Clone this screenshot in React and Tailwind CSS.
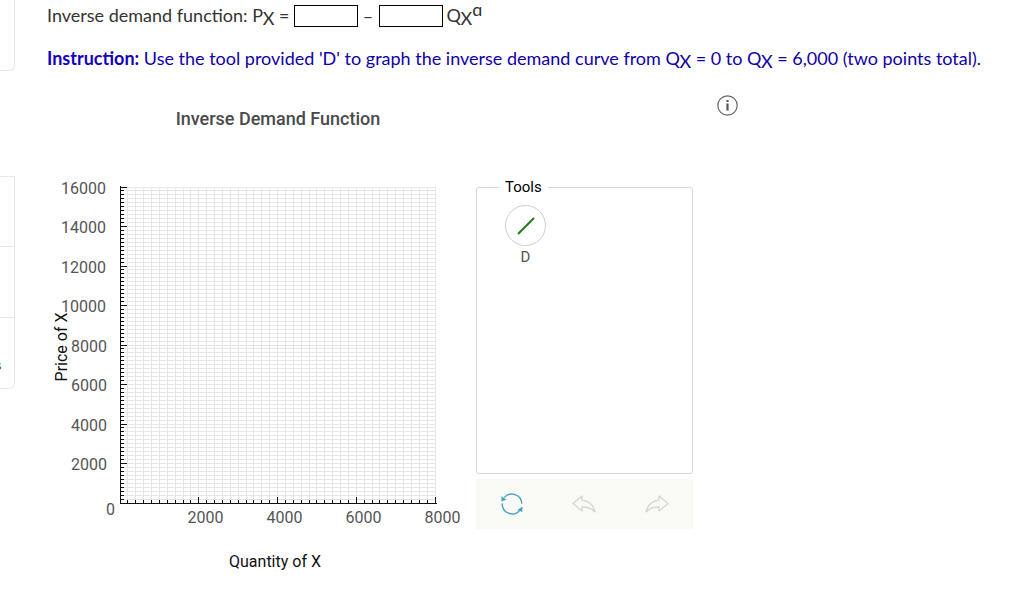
const CHART_X = 73;
const CHART_Y = 17;
const CHART_SIZE = 316;
const Y_MAX = 16000;
const X_MAX = 8000;
const STEP = 200;

const yTicks = Array.from({ length: Y_MAX / STEP + 1 }, (_, i) => i * STEP);
const xTicks = Array.from({ length: X_MAX / STEP + 1 }, (_, i) => i * STEP);

const yPos = (value) => Math.floor(CHART_Y + CHART_SIZE - (value / Y_MAX) * CHART_SIZE) + 0.5;
const xPos = (value) => Math.floor(CHART_X + (value / X_MAX) * (CHART_SIZE - 1)) + 0.5;

function Sidebar() {
  return (
    <aside className="w-[15px] shrink-0 overflow-hidden">
      <div className="h-[71px] border-r border-b border-[#e8e8e8] rounded-br-md" />
      <div className="mt-[105px] border border-l-0 border-[#e8e8e8] rounded-br-md divide-y divide-[#e8e8e8]">
        <div className="h-[70px]" />
        <div className="h-[71px]" />
        <div className="h-[70px] flex items-center justify-start pt-6">
          <span className="-ml-[5px] text-sm font-bold text-[#222]">s</span>
        </div>
      </div>
    </aside>
  );
}

function Var({ name }) {
  return (
    <>
      {name}
      <span className="relative top-[3px]">X</span>
    </>
  );
}

function Blank({ label }) {
  return (
    <input
      type="text"
      aria-label={label}
      className="w-16 h-[22px] px-1 border border-black bg-white text-base outline-none"
    />
  );
}

function Chart() {
  return (
    <svg viewBox="0 0 429 406" className="block w-full font-['Roboto',sans-serif]" role="img" aria-label="Inverse Demand Function">
      <g stroke="#e6e6e6" strokeWidth="1">
        {yTicks.slice(1).map((v) => (
          <line key={v} x1={CHART_X} x2={CHART_X + CHART_SIZE} y1={yPos(v)} y2={yPos(v)} />
        ))}
        {xTicks.slice(1).map((v) => (
          <line key={v} x1={xPos(v)} x2={xPos(v)} y1={CHART_Y} y2={CHART_Y + CHART_SIZE} />
        ))}
      </g>

      <g stroke="#111" strokeWidth="1">
        {yTicks.map((v) => (
          <line key={v} x1={CHART_X} x2={CHART_X + (v % 2000 === 0 ? 7 : 4)} y1={yPos(v)} y2={yPos(v)} />
        ))}
        {xTicks.map((v) => (
          <line key={v} x1={xPos(v)} x2={xPos(v)} y1={CHART_Y + CHART_SIZE - (v % 2000 === 0 ? 6 : 3)} y2={CHART_Y + CHART_SIZE} />
        ))}
        <line x1={CHART_X + 0.5} x2={CHART_X + 0.5} y1={CHART_Y - 1} y2={CHART_Y + CHART_SIZE} />
        <line x1={CHART_X} x2={CHART_X + CHART_SIZE + 1} y1={yPos(0)} y2={yPos(0)} />
      </g>

      <g fill="#555" fontSize="16">
        {yTicks.filter((v) => v > 0 && v % 2000 === 0).map((v) => (
          <text key={v} x={v < 10000 ? 60 : 59} y={yPos(v) + 6} textAnchor="end">{v}</text>
        ))}
        <text x="68" y="345" textAnchor="end">0</text>
        {xTicks.filter((v) => v > 0 && v % 2000 === 0).map((v) => (
          <text key={v} x={xPos(v) + 7} y="353" textAnchor="middle">{v}</text>
        ))}
      </g>

      <g fill="#111" fontSize="16">
        <text x="228" y="397" textAnchor="middle">Quantity of X</text>
        <text transform="translate(20 177) rotate(-90)" textAnchor="middle">Price of X</text>
      </g>
    </svg>
  );
}

function Tools() {
  return (
    <div className="w-[217px] shrink-0 mt-[7px] font-['Roboto',sans-serif]">
      <fieldset className="h-[297px] border border-[#d8d8d8] rounded-[3px]">
        <legend className="ml-[22px] px-[6px] h-5 text-[15px] leading-5 text-black">Tools</legend>
        <div className="flex flex-col items-center w-fit ml-7 mt-2">
          <button id="tool-d" className="w-[41px] h-[41px] rounded-full border border-[#ccc] flex items-center justify-center">
            <svg width="20" height="20" viewBox="0 0 20 20" aria-hidden="true">
              <path d="M2 18 18 2" stroke="#1d7a1d" strokeWidth="2" />
            </svg>
          </button>
          <label htmlFor="tool-d" className="mt-px text-[15px] leading-5 text-[#555]">D</label>
        </div>
      </fieldset>

      <div className="mt-[5px] h-[50px] grid grid-cols-3 bg-[#f9f9f5]">
        <button aria-label="Reset" className="flex items-center justify-center">
          <svg width="22" height="22" viewBox="0 0 22 22" fill="none" stroke="#4ba3bd" strokeWidth="1.4">
            <path d="M3.2 4.6A10 10 0 0 1 20.8 10.8" />
            <path d="M18.8 17.4A10 10 0 0 1 1.2 10.5" />
            <path d="M.4 3.2 5.4 6.8.4 8.4ZM21.6 13.6 16.4 17 21.2 19Z" fill="#4ba3bd" stroke="none" />
          </svg>
        </button>
        <button aria-label="Undo" className="flex items-center justify-center">
          <svg width="24" height="18" viewBox="0 0 24 18" fill="none" stroke="#d4d4d2" strokeWidth="1.2" strokeLinejoin="round">
            <path d="M1 8.5 10 1V5.2C16.5 6 21.5 10 23 17 19 12.5 15 11.7 10 11.8V16Z" />
          </svg>
        </button>
        <button aria-label="Redo" className="flex items-center justify-center">
          <svg width="24" height="18" viewBox="0 0 24 18" fill="none" stroke="#d4d4d2" strokeWidth="1.2" strokeLinejoin="round">
            <path d="M23 8.5 14 1V5.2C7.5 6 2.5 10 1 17 5 12.5 9 11.7 14 11.8V16Z" />
          </svg>
        </button>
      </div>
    </div>
  );
}

export default function App() {
  return (
    <div className="flex bg-white font-['Lato',sans-serif]">
      <Sidebar />

      <main className="flex-1 min-w-0 pl-8">
        <div className="h-8 flex items-center text-[18px] leading-7 text-[#333]">
          <span className="mr-1 pb-[2px]">Inverse demand function: <Var name="P" /> =</span>
          <Blank label="Intercept" />
          <span className="w-[21px] text-center">–</span>
          <Blank label="Slope" />
          <span className="ml-1 pb-[2px]">
            <Var name="Q" />
            <span className="relative -top-[6px]">ɑ</span>
          </span>
        </div>

        <p className="mt-3 text-[18px] leading-7 text-[#1100a8] whitespace-nowrap">
          <strong className="font-bold text-[#1500c0]">Instruction:</strong> Use the tool provided 'D' to graph the inverse
          demand curve from <Var name="Q" /> = 0 to <Var name="Q" /> = 6,000 (two points total).
        </p>

        <div className="mt-[23px] h-[75px] w-[691px] flex items-start justify-between">
          <h2 className="w-[462px] mt-3 text-center text-[18px] leading-6 font-medium text-[#4a4a4a] font-['Roboto',sans-serif]">
            Inverse Demand Function
          </h2>
          <button aria-label="Information" className="w-[21px] h-[21px]">
            <svg width="21" height="21" viewBox="0 0 21 21" fill="none">
              <circle cx="10.5" cy="10.5" r="9.7" stroke="#666" strokeWidth="1.2" />
              <path d="M10.5 8.5V15.5M10.5 5V7" stroke="#555" strokeWidth="2.2" />
            </svg>
          </button>
        </div>

        <div className="flex items-start">
          <div className="w-[429px] shrink-0">
            <Chart />
          </div>
          <Tools />
        </div>
      </main>
    </div>
  );
}
